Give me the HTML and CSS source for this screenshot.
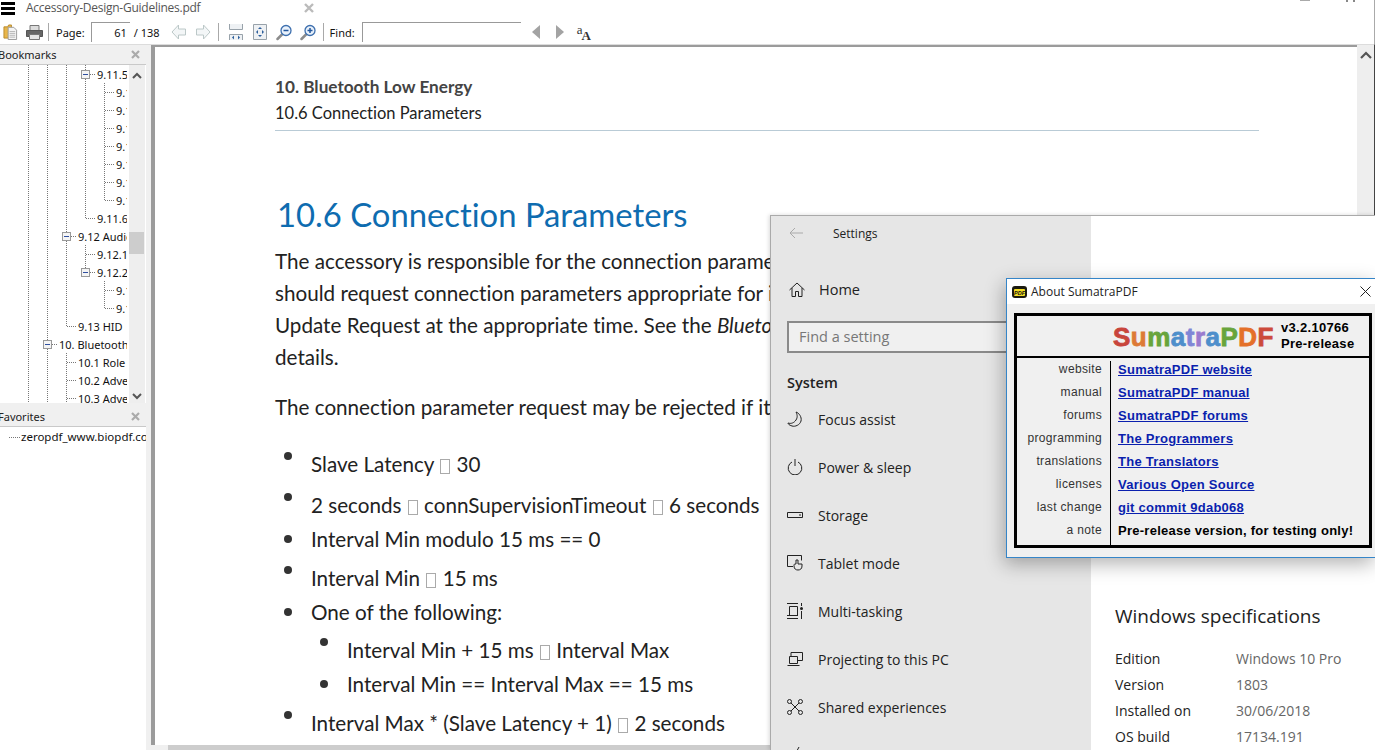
FILE: index.html
```html
<!DOCTYPE html>
<html lang="en">
<head>
<meta charset="utf-8">
<title>Accessory-Design-Guidelines.pdf</title>
<link rel="stylesheet" href="styles.css">
</head>
<body>
<div class="desktop">

  <section class="app">
    <header class="titlebar">
      <span class="burger"><i></i><i></i><i></i></span>
      <span class="doc-title">Accessory-Design-Guidelines.pdf</span>
      <svg class="tab-close" width="10" height="10" viewBox="0 0 10 10"><path d="M1 1l8 8M9 1l-8 8" stroke="#bbb" stroke-width="2.4"/></svg>
      <span class="win-btn-min"></span>
      <span class="win-btn-close"></span>
    </header>
    <div class="toolbar">
      <svg class="tb open" width="15" height="16" viewBox="0 0 16 17"><path d="M1 3h4l1-2h3v14H1z" fill="#e8b64a" stroke="#b98a2c"/><path d="M5.500 3.500h6l3 3v10h-9z" fill="#f4f4f4" stroke="#9a9a9a"/><path d="M7 8h6M7 10h6M7 12h6M7 14h6" stroke="#b5b5b5"/></svg>
      <svg class="tb print" width="17" height="15" viewBox="0 0 17 15"><path d="M4 .5h9v5H4z" fill="#dcdcdc" stroke="#777"/><path d="M.5 5.500h16v6H.5z" fill="#666" stroke="#555"/><path d="M3.500 9.500h10v5h-10z" fill="#e5e5e5" stroke="#777"/></svg>
      <span class="sep sep-a"></span>
      <span class="lbl">Page:</span>
      <span class="field page-field">61</span>
      <span class="lbl total">/ 138</span>
      <svg class="tb back" width="16" height="16" viewBox="0 0 16 16"><path d="M7.500 1 1 8l6.500 7v-4h7V5h-7z" fill="#f3f6f7" stroke="#bcc8c8"/></svg>
      <svg class="tb fwd" width="16" height="16" viewBox="0 0 16 16"><path d="M8.500 1 15 8l-6.500 7v-4h-7V5h7z" fill="#f3f6f7" stroke="#bcc8c8"/></svg>
      <span class="sep sep-b"></span>
      <svg class="tb fitw" width="14" height="16" viewBox="0 0 14 16"><path d="M.5 0v5.500h13V0" fill="#eef1f4" stroke="#98a2aa"/><path d="M.5 16v-5.500h13V16" fill="#eef1f4" stroke="#98a2aa"/><path d="M5 11.500l-2 2 2 2zM9 11.500l2 2-2 2z" fill="#2d5f9c"/></svg>
      <svg class="tb fitp" width="14" height="16" viewBox="0 0 14 16"><path d="M.5.500h13v15H.5z" fill="#eef1f4" stroke="#98a2aa"/><path d="M7 3l-2 2h4zM7 13l-2-2h4zM3 8l2-2v4zM11 8l-2-2v4z" fill="#2d5f9c"/></svg>
      <svg class="tb zout" width="17" height="17" viewBox="0 0 17 17"><path d="M6 10.500 1.500 15" stroke="#8c8c8c" stroke-width="2.500" stroke-linecap="round"/><circle cx="10" cy="6.500" r="5" fill="#eaf2fb" stroke="#3d6fae" stroke-width="1.300"/><path d="M7.500 6.500h5" stroke="#22569c" stroke-width="1.500"/></svg>
      <svg class="tb zin" width="17" height="17" viewBox="0 0 17 17"><path d="M6 10.500 1.500 15" stroke="#8c8c8c" stroke-width="2.500" stroke-linecap="round"/><circle cx="10" cy="6.500" r="5" fill="#eaf2fb" stroke="#3d6fae" stroke-width="1.300"/><path d="M7.500 6.500h5M10 4v5" stroke="#22569c" stroke-width="1.500"/></svg>
      <span class="sep sep-c"></span>
      <span class="lbl find">Find:</span>
      <span class="field find-field"></span>
      <svg class="tb prev" width="9" height="14" viewBox="0 0 9 14"><path d="M8 0v14L0 7z" fill="#a3a3a3"/></svg>
      <svg class="tb next" width="9" height="14" viewBox="0 0 9 14"><path d="M1 0v14l8-7z" fill="#a3a3a3"/></svg>
      <span class="match"><b class="m-a">a</b><b class="m-b">A</b></span>
    </div>
    <div class="app-main">
      <aside class="sidebar">
        <div class="pane-head bookmarks-head"><span>Bookmarks</span><svg width="9" height="9" viewBox="0 0 9 9"><path d="M1 1l7 7M8 1l-7 7" stroke="#aaa" stroke-width="2.200"/></svg></div>
        <div class="tree-wrap">
          <div class="tree">
            <div class="row"><i class="g"></i><i class="g"></i><i class="g"></i><i class="bx tb"><u></u></i><span class="n">9.11.5 Foo</span></div>
            <div class="row"><i class="g"></i><i class="g"></i><i class="g"></i><i class="g"></i><i class="c"></i><span class="n">9.11.5.1</span></div>
            <div class="row"><i class="g"></i><i class="g"></i><i class="g"></i><i class="g"></i><i class="c"></i><span class="n">9.11.5.2</span></div>
            <div class="row"><i class="g"></i><i class="g"></i><i class="g"></i><i class="g"></i><i class="c"></i><span class="n">9.11.5.3</span></div>
            <div class="row"><i class="g"></i><i class="g"></i><i class="g"></i><i class="g"></i><i class="c"></i><span class="n">9.11.5.4</span></div>
            <div class="row"><i class="g"></i><i class="g"></i><i class="g"></i><i class="g"></i><i class="c"></i><span class="n">9.11.5.5</span></div>
            <div class="row"><i class="g"></i><i class="g"></i><i class="g"></i><i class="g"></i><i class="c"></i><span class="n">9.11.5.6</span></div>
            <div class="row"><i class="g"></i><i class="g"></i><i class="g"></i><i class="g"></i><i class="l"></i><span class="n">9.11.5.7</span></div>
            <div class="row"><i class="g"></i><i class="g"></i><i class="g"></i><i class="l"></i><span class="n">9.11.6 Foo</span></div>
            <div class="row"><i class="g"></i><i class="g"></i><i class="bx tb"><u></u></i><span class="n">9.12 Audio</span></div>
            <div class="row"><i class="g"></i><i class="g"></i><i class="g"></i><i class="c"></i><span class="n">9.12.1 Foo</span></div>
            <div class="row"><i class="g"></i><i class="g"></i><i class="g"></i><i class="bx up"><u></u></i><span class="n">9.12.2 Foo</span></div>
            <div class="row"><i class="g"></i><i class="g"></i><i class="g"></i><i class="e"></i><i class="c"></i><span class="n">9.12.2.1</span></div>
            <div class="row"><i class="g"></i><i class="g"></i><i class="g"></i><i class="e"></i><i class="l"></i><span class="n">9.12.2.2</span></div>
            <div class="row"><i class="g"></i><i class="g"></i><i class="l"></i><span class="n">9.13 HID</span></div>
            <div class="row"><i class="g"></i><i class="bx tb"><u></u></i><span class="n">10. Bluetooth Low</span></div>
            <div class="row"><i class="g"></i><i class="g"></i><i class="c"></i><span class="n">10.1 Role</span></div>
            <div class="row"><i class="g"></i><i class="g"></i><i class="c"></i><span class="n">10.2 Advertising</span></div>
            <div class="row"><i class="g"></i><i class="g"></i><i class="c"></i><span class="n">10.3 Advertising</span></div>
          </div>
          <div class="tree-scroll">
            <svg width="10" height="7" viewBox="0 0 10 7"><path d="M1 6l4-4 4 4" fill="none" stroke="#555" stroke-width="2"/></svg>
            <span class="thumb"></span>
            <svg width="10" height="7" viewBox="0 0 10 7"><path d="M1 1l4 4 4-4" fill="none" stroke="#555" stroke-width="2"/></svg>
          </div>
        </div>
        <div class="pane-head favorites-head"><span>Favorites</span><svg width="9" height="9" viewBox="0 0 9 9"><path d="M1 1l7 7M8 1l-7 7" stroke="#aaa" stroke-width="2.200"/></svg></div>
        <div class="fav-list"><i class="fav-dots"></i><span>zeropdf_www.biopdf.com</span></div>
      </aside>
      <main class="canvas">
        <div class="doc-col">
          <article class="page">
            <p class="run-chapter">10. Bluetooth Low Energy</p>
            <p class="run-section">10.6 Connection Parameters</p>
            <hr class="rule">
            <h1>10.6 Connection Parameters</h1>
            <p class="para">The accessory is responsible for the connection parameters used for the Low Energy link.<br>should request connection parameters appropriate for its use case by sending an L2CAP<br>Update Request at the appropriate time. See the <em>Bluetooth 4.0 specification</em> for<br>details.</p>
            <p class="para para2">The connection parameter request may be rejected if it does not comply with all of these</p>
            <ul class="bullets">
              <li class="b1 hi">Slave Latency <span class="tofu"></span> 30</li>
              <li class="b2 hi">2 seconds <span class="tofu"></span> connSupervisionTimeout <span class="tofu"></span> 6 seconds</li>
              <li class="b3">Interval Min modulo 15 ms == 0</li>
              <li class="b4 hi">Interval Min <span class="tofu"></span> 15 ms</li>
              <li class="b5">One of the following:
                <ul>
                  <li class="b6 hi">Interval Min + 15 ms <span class="tofu"></span> Interval Max</li>
                  <li class="b7">Interval Min == Interval Max == 15 ms</li>
                </ul>
              </li>
              <li class="b8 hi">Interval Max * (Slave Latency + 1) <span class="tofu"></span> 2 seconds</li>
            </ul>
          </article>
          <div class="hscroll"><span class="hthumb"></span></div>
        </div>
        <div class="page-scroll">
          <svg width="12" height="8" viewBox="0 0 12 8"><path d="M1 7l5-5 5 5" fill="none" stroke="#555" stroke-width="2.200"/></svg>
        </div>
      </main>
    </div>
  </section>

  <section class="settings">
    <nav class="set-nav">
      <div class="set-title">
        <svg width="14" height="12" viewBox="0 0 14 12"><path d="M6 1 1 6l5 5M1 6h13" fill="none" stroke="#aaa" stroke-width="1"/></svg>
        <span>Settings</span>
      </div>
      <div class="set-home">
        <svg width="16" height="15" viewBox="0 0 16 15"><path d="M.5 8 8 1l7.500 7M3 6v8.500h3.500V9.500h3v5H13V6" fill="none" stroke="#222"/></svg>
        <span>Home</span>
      </div>
      <div class="set-search">Find a setting</div>
      <div class="set-group">System</div>
      <div class="set-item">
        <svg width="16" height="16" viewBox="0 0 16 16"><path d="M9 1c3 1 6 5 5 9s-6 6-9 5-4-2-4-3c3 1 6 0 8-3s1-6 0-8z" fill="none" stroke="#222"/></svg>
        <span>Focus assist</span>
      </div>
      <div class="set-item">
        <svg width="16" height="16" viewBox="0 0 16 16"><path d="M5 3a6.800 6.800 0 1 0 6 0M8 0v7" fill="none" stroke="#222"/></svg>
        <span>Power &amp; sleep</span>
      </div>
      <div class="set-item">
        <svg width="16" height="7" viewBox="0 0 16 7"><path d="M.5.500h15v5H.5z" fill="none" stroke="#222"/><path d="M12 2.500h2v1h-2z" fill="#222"/></svg>
        <span>Storage</span>
      </div>
      <div class="set-item">
        <svg width="16" height="16" viewBox="0 0 16 16"><path d="M6 11.500H.5V.500h14v5" fill="none" stroke="#222"/><path d="M9 5v4H8c-1 0-1 1-1 2 0 3 2 4 4 4s4-1 4-4V9h-4V5z" fill="#e6e6e6" stroke="#222"/></svg>
        <span>Tablet mode</span>
      </div>
      <div class="set-item">
        <svg width="16" height="16" viewBox="0 0 16 16"><path d="M0 .500h11M0 15.500h11M0 12.500h11M2.500 3.500h8v9h-8zM14.500 0v3M14.500 8v8" fill="none" stroke="#222"/><circle cx="14.500" cy="5.500" r="1.500" fill="#222"/></svg>
        <span>Multi-tasking</span>
      </div>
      <div class="set-item">
        <svg width="16" height="15" viewBox="0 0 16 15"><path d="M4 4V.5h11.500v8H11" fill="none" stroke="#222"/><path d="M2.500 4.500h8v7h-8zM.5 13.500h12" fill="none" stroke="#222"/></svg>
        <span>Projecting to this PC</span>
      </div>
      <div class="set-item">
        <svg width="16" height="16" viewBox="0 0 16 16"><circle cx="2.500" cy="2.500" r="2" fill="none" stroke="#222"/><circle cx="13.500" cy="2.500" r="2" fill="none" stroke="#222"/><circle cx="2.500" cy="13.500" r="2" fill="none" stroke="#222"/><circle cx="13.500" cy="13.500" r="2" fill="none" stroke="#222"/><path d="M4 4l8 8M12 4l-8 8" stroke="#222"/></svg>
        <span>Shared experiences</span>
      </div>
      <div class="set-item">
        <svg width="16" height="16" viewBox="0 0 16 16"><path d="M1 8l4 5M12 0 5 13" fill="none" stroke="#222"/></svg>
      </div>
    </nav>
    <div class="set-body">
      <h2>Windows specifications</h2>
      <dl class="spec">
        <dt>Edition</dt><dd>Windows 10 Pro</dd>
        <dt>Version</dt><dd>1803</dd>
        <dt>Installed on</dt><dd>30/06/2018</dd>
        <dt>OS build</dt><dd>17134.191</dd>
      </dl>
    </div>
  </section>

  <section class="about">
    <header class="about-title">
      <svg class="pdf-icon" width="15" height="12" viewBox="0 0 15 12"><rect width="15" height="12" rx="3" fill="#1b1b10"/><rect x="2" y="3" width="11" height="7" rx="1" fill="#f3dc22"/><text x="7.500" y="9" text-anchor="middle" class="pdf-mark">PDF</text></svg>
      <span>About SumatraPDF</span>
      <svg class="about-x" width="11" height="11" viewBox="0 0 11 11"><path d="M.5.500l10 10M10.500.500l-10 10" stroke="#222"/></svg>
    </header>
    <div class="about-body">
      <div class="frame">
        <div class="brand">
          <div class="logo"><b class="c1">S</b><b class="c2">u</b><b class="c3">m</b><b class="c4">a</b><b class="c5">t</b><b class="c6">r</b><b class="c4">a</b><b class="c3">P</b><b class="c7">D</b><b class="c8">F</b></div>
          <div class="ver"><span>v3.2.10766</span><span>Pre-release</span></div>
        </div>
        <div class="links">
          <div class="labels">
            <span>website</span><span>manual</span><span>forums</span><span>programming</span><span>translations</span><span>licenses</span><span>last change</span><span>a note</span>
          </div>
          <div class="values">
            <a href="#">SumatraPDF website</a><a href="#">SumatraPDF manual</a><a href="#">SumatraPDF forums</a><a href="#">The Programmers</a><a href="#">The Translators</a><a href="#">Various Open Source</a><a href="#">git commit 9dab068</a><span>Pre-release version, for testing only!</span>
          </div>
        </div>
      </div>
    </div>
  </section>

</div>
</body>
</html>
```

FILE: styles.css
```css
* { box-sizing: border-box; }
html, body { margin: 0; padding: 0; background: #fff; overflow: hidden; }
p, h1, h2, ul, dl, dd { margin: 0; padding: 0; }
i, u { font-style: normal; text-decoration: none; display: block; }

.desktop {
  position: relative;
  width: 1375px;
  height: 750px;
  overflow: hidden;
  background: #fff;
  font-family: "Open Sans", "Noto Sans", sans-serif;
}

/* PDF viewer window */
.app { position: absolute; inset: 0; display: flex; flex-direction: column; }
.titlebar { height: 16px; display: flex; align-items: center; position: relative; border-right: 1px solid #aaa; }
.burger { width: 14px; margin-left: 1px; display: flex; flex-direction: column; gap: 2px; }
.burger i { height: 3px; background: #000; }
.doc-title { margin-left: 11px; font-size: 12px; color: #555; line-height: 16px; letter-spacing: -.25px; }
.tab-close { margin-left: 104px; }
.win-btn-min { position: absolute; left: 1300px; top: 0; width: 10px; height: 1px; background: #aaa; }
.win-btn-close { position: absolute; left: 1346px; top: 0; width: 9px; height: 2px; background: linear-gradient(90deg,#888 0 2px,transparent 2px 7px,#888 7px); }

.toolbar { height: 28px; padding-top: 4px; position: relative; display: flex; align-items: center; font-family: "Noto Sans", sans-serif; font-size: 11px; color: #111; border-right: 1px solid #aaa; }
.tb { flex: none; }
.open { margin-left: 3px; }
.print { margin-left: 8px; }
.sep { width: 1px; height: 18px; background: #a9a9a9; flex: none; }
.sep-a { margin-left: 5px; }
.lbl { white-space: nowrap; }
.toolbar .lbl { margin-left: 7px; }
.field { border-top: 1px solid #999; border-left: 1px solid #999; height: 20px; flex: none; display: block; line-height: 19px; }
.page-field { width: 39px; margin-left: 6px; text-align: right; padding-right: 3px; }
.toolbar .total { margin-left: 4px; }
.back { margin-left: 11px; }
.fwd { margin-left: 8px; }
.sep-b { margin-left: 7px; }
.fitw { margin-left: 10px; }
.fitp { margin-left: 10px; }
.zout { margin-left: 9px; }
.zin { margin-left: 7px; }
.sep-c { margin-left: 6px; }
.toolbar .find { margin-left: 6px; }
.find-field { width: 159px; margin-left: 7px; }
.prev { margin-left: 11px; }
.next { margin-left: 14px; }
.match { margin-left: 13px; display: flex; font-family: "Liberation Serif", serif; width: 15px; height: 15px; }
.m-a { font-size: 13px; font-weight: 400; color: #333; line-height: 10px; }
.m-b { font-size: 13px; color: #333; line-height: 15px; margin-top: 3px; margin-left: -1px; }

.app-main { flex: 1; min-height: 0; display: flex; border-top: 1px solid #dcdcdc; border-right: 1px solid #444; }

.sidebar { width: 151px; flex: none; display: flex; flex-direction: column; background: #f0f0f0; padding-right: 5px; }
.pane-head { height: 20px; flex: none; display: flex; align-items: center; justify-content: space-between; padding-right: 6px; font-family: "Noto Sans", sans-serif; font-size: 11px; color: #222; background: #f0f0f0; border-bottom: 1px solid #c9c9c9; white-space: nowrap; }
.pane-head span { margin-left: -2px; }
.tree-wrap { height: 338px; display: flex; background: #fff; overflow: hidden; flex: none; }
.tree { width: 127px; margin-right: 2px; flex: none; padding-left: 19px; overflow: hidden; }
.row { height: 18px; display: flex; align-items: center; white-space: nowrap; font-family: "Noto Sans", sans-serif; font-size: 11px; color: #111; }
.row > i { width: 19px; height: 18px; flex: none; }
.g, .c, .l, .bx { --dots: repeating-linear-gradient(#777 0 1px, transparent 1px 2px); --hdots: repeating-linear-gradient(90deg, #777 0 1px, transparent 1px 2px); }
.g { background: var(--dots) 9px 0/1px 100% no-repeat; }
.c { background: var(--dots) 9px 0/1px 100% no-repeat, var(--hdots) 10px 9px/9px 1px no-repeat; }
.l { background: var(--dots) 9px 0/1px 9px no-repeat, var(--hdots) 10px 9px/9px 1px no-repeat; }
.bx { display: flex !important; align-items: center; justify-content: flex-end; }
.bx.tb { background: var(--dots) 9px 0/1px 100% no-repeat, var(--hdots) 14px 9px/5px 1px no-repeat; }
.bx.up { background: var(--dots) 9px 0/1px 6px no-repeat, var(--hdots) 14px 9px/5px 1px no-repeat; }
.bx u { width: 9px; height: 9px; margin-right: 5px; border: 1px solid #999; background: linear-gradient(#2f4f9f,#2f4f9f) center/5px 1px no-repeat, #f4f4f4; }
.n { margin-left: 2px; }
.tree-scroll { width: 16px; flex: none; background: #eee; display: flex; flex-direction: column; align-items: center; justify-content: space-between; padding: 7px 0 3px; position: relative; }
.thumb { position: absolute; left: 0; top: 167px; width: 15px; height: 22px; background: #cdcdcd; }
.favorites-head { height: 24px; padding-top: 4px; }
.fav-list { flex: 1; min-height: 0; background: #fff; display: flex; align-items: flex-start; font-family: "Noto Sans", sans-serif; font-size: 11.5px; line-height: 20px; color: #111; overflow: hidden; white-space: nowrap; }
.fav-dots { width: 11px; height: 1px; margin: 10px 1px 0 9px; flex: none; background: repeating-linear-gradient(90deg, #777 0 1px, transparent 1px 2px); }

.canvas { flex: 1; min-width: 0; display: flex; background: #fff; }
.doc-col { flex: 1; min-width: 0; display: flex; flex-direction: column; }
.page { flex: 1; min-height: 0; overflow: hidden; border-top: 2px solid #9b9b9b; border-left: 4px solid #9b9b9b; padding: 28px 98px 0 120px; font-family: Lato, sans-serif; font-variant-ligatures: none; color: #222; white-space: nowrap; }
.hscroll { height: 5px; flex: none; background: #f0f0f0; padding-left: 17px; display: flex; }
.hthumb { flex: 1; background: #cdcdcd; }
.run-chapter { font-size: 17.2px; font-weight: 700; color: #444; line-height: 24px; }
.run-section { font-size: 16.5px; line-height: 28px; color: #222; }
.rule { margin: 3px 0 0; border: 0; height: 1px; background: #b9cbd6; }
h1 { font-size: 32.800px; font-weight: 400; color: #0e6cb0; line-height: 44px; margin: 62px 0 0 2px; }
.para { font-size: 20.65px; line-height: 32px; margin-top: 8px; }
.para2 { margin-top: 18px; }
.bullets { list-style: none; font-size: 20.65px; }
.bullets li { position: relative; padding-left: 36px; line-height: 30px; }
.bullets li::before { content: ""; position: absolute; left: 9px; top: 11px; width: 8px; height: 8px; border-radius: 50%; background: #333; }
.bullets li.hi::before { top: 3px; }
.bullets ul { list-style: none; }
.b1 { margin-top: 26px; }
.b2 { margin-top: 11px; }
.b3 { margin-top: 4px; }
.b4 { margin-top: 9px; }
.b5 { margin-top: 4px; }
.b6 { margin-top: 8px; }
.b7 { margin-top: 4px; }
.b8 { margin-top: 9px; }
.tofu { display: inline-block; width: 10px; height: 15px; border: 1px solid #aaa; vertical-align: -2px; margin: 0 1px; }
.page-scroll { width: 17px; flex: none; background: #eee; display: flex; justify-content: center; padding-top: 6px; }
.page-scroll svg { display: block; }

/* Settings window */
.settings { position: absolute; left: 770px; top: 215px; width: 605px; height: 535px; display: flex; border-left: 1px solid #aaa; border-top: 1px solid #aaa; background: #fff; font-family: "Open Sans", sans-serif; color: #222; box-shadow: -1px 0 4px rgba(0,0,0,.15); }
.set-nav { width: 320px; flex: none; background: #e6e6e6; overflow: hidden; }
.set-title { height: 34px; display: flex; align-items: center; font-size: 12px; padding-left: 18px; }
.set-title span { margin-left: 30px; }
.set-home { margin-top: 23px; height: 32px; display: flex; align-items: center; font-size: 14.500px; padding-left: 18px; }
.set-home span { margin-left: 14px; }
.set-search { margin: 16px 0 0 16px; height: 32px; width: 260px; border: 2px solid #8a8a8a; background: #f0f0f0; font-size: 14.500px; color: #777; padding-left: 10px; line-height: 27px; }
.set-group { margin: 19px 0 1px 16px; font-size: 14.500px; font-weight: 600; line-height: 22px; }
.set-item { height: 48px; display: flex; align-items: center; font-size: 14px; padding-left: 16px; }
.set-item svg { flex: none; }
.set-item svg + span { margin-left: 15px; }
.set-body { flex: 1; padding: 385px 0 0 24px; }
h2 { font-size: 19px; font-weight: 400; line-height: 30px; }
.spec { margin-top: 14px; display: grid; grid-template-columns: 121px auto; grid-auto-rows: 26px; font-size: 14px; align-items: center; }
.spec dd { color: #666; }

/* About dialog */
.about { position: absolute; left: 1006px; top: 278px; width: 369px; height: 280px; background: #f0f0f0; border: 1px solid #3585c8; border-right: 0; box-shadow: -2px 6px 18px rgba(0,0,0,.3); display: flex; flex-direction: column; }
.about-title { height: 25px; flex: none; background: #fff; display: flex; align-items: center; font-family: "Open Sans", sans-serif; font-size: 12px; color: #222; padding-left: 5px; position: relative; }
.pdf-icon { margin-right: 4px; }
.pdf-mark { font-family: "Liberation Sans", sans-serif; font-size: 5.500px; font-weight: 700; font-style: italic; fill: #111; }
.about-x { position: absolute; left: 353px; top: 7px; }
.about-body { flex: 1; padding: 9px 3px 9px 7px; }
.frame { height: 100%; border: 3px solid #000; display: flex; flex-direction: column; font-family: "Liberation Sans", sans-serif; }
.brand { height: 42px; flex: none; border-bottom: 2px solid #000; display: flex; justify-content: flex-end; align-items: center; }
.logo { font-size: 26px; line-height: 30px; letter-spacing: .5px; -webkit-text-stroke: .8px currentColor; padding-top: 2px; }
.logo b { font-weight: 700; }
.c1 { color: #c8453c; } .c2 { color: #dd7a36; } .c3 { color: #68a43c; } .c4 { color: #4e8fcb; }
.c5 { color: #7f87d6; } .c6 { color: #9a7ccf; } .c7 { color: #e4702a; } .c8 { color: #cc4a3c; }
.ver { display: flex; flex-direction: column; font-size: 13px; font-weight: 700; color: #000; line-height: 16px; margin-left: 7px; width: 88px; letter-spacing: .3px; }
.links { flex: 1; display: flex; }
.labels { width: 93px; flex: none; padding-right: 8px; display: flex; flex-direction: column; align-items: flex-end; font-size: 12px; letter-spacing: .35px; color: #333; }
.values { flex: 1; background: linear-gradient(#000,#000) 0 3px/1px calc(100% - 3px) no-repeat; padding-left: 8px; display: flex; flex-direction: column; font-size: 13px; font-weight: 700; letter-spacing: .26px; color: #000; }
.labels span, .values a, .values span { height: 23px; line-height: 23px; white-space: nowrap; flex: none; }
.values a { color: #0a1fae; text-decoration: underline; align-self: flex-start; }
```
